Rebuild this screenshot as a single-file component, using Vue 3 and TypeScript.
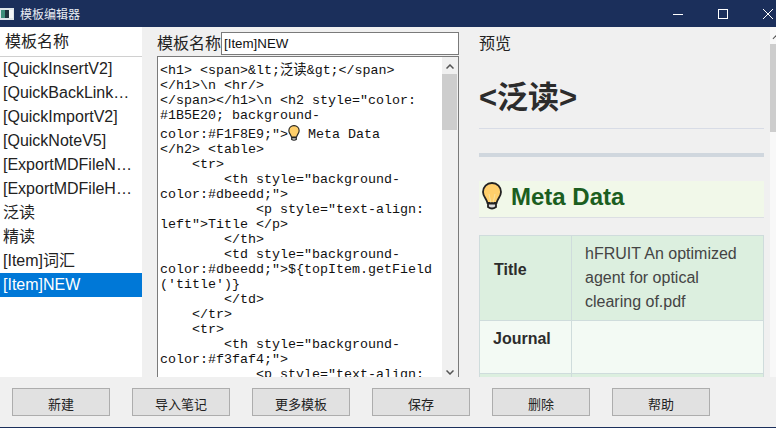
<script setup lang="ts">
const templates: string[] = [
  '[QuickInsertV2]',
  '[QuickBackLinkV2]',
  '[QuickImportV2]',
  '[QuickNoteV5]',
  '[ExportMDFileNotes]',
  '[ExportMDFileHeader]',
  '泛读',
  '精读',
  '[Item]词汇',
  '[Item]NEW',
]
const selected = '[Item]NEW'
const actions: string[] = ['新建', '导入笔记', '更多模板', '保存', '删除', '帮助']
const before: string[] = [
  '<h1> <span>&lt;泛读&gt;</span>',
  '</h1>\\n <hr/>',
  '</span></h1>\\n <h2 style="color:',
  '#1B5E20; background-',
]
const bulbLine = 'color:#F1F8E9;">'
const bulbTail = ' Meta Data'
const after: string[] = [
  '</h2> <table>',
  '    <tr>',
  '        <th style="background-',
  'color:#dbeedd;">',
  '            <p style="text-align:',
  'left">Title </p>',
  '        </th>',
  '        <td style="background-',
  'color:#dbeedd;">${topItem.getField',
  "('title')}",
  '        </td>',
  '    </tr>',
  '    <tr>',
  '        <th style="background-',
  'color:#f3faf4;">',
  '            <p style="text-align:',
]
</script>

<template>
  <div class="window">
    <header class="titlebar">
      <svg class="app-icon" viewBox="0 0 14 12" width="14" height="12">
        <rect width="14" height="12" fill="#dfe6ea" />
        <rect x="1" y="2" width="4" height="8" fill="#3f8f7a" />
        <rect x="5" y="2" width="4" height="8" fill="#20343c" />
        <rect x="9" y="2" width="4" height="8" fill="#f4f6f7" />
      </svg>
      <span class="title">模板编辑器</span>
      <div class="controls">
        <svg viewBox="0 0 10 10" width="10" height="10"><path d="M0 5.500H10" stroke="#fff" /></svg>
        <svg viewBox="0 0 10 10" width="10" height="10"><rect x=".5" y=".5" width="9" height="9" fill="none" stroke="#fff" /></svg>
        <svg viewBox="0 0 10 10" width="10" height="10"><path d="M0 0L10 10M10 0L0 10" stroke="#fff" /></svg>
      </div>
    </header>

    <main class="main">
      <aside class="list">
        <div class="list-head">模板名称</div>
        <div
          v-for="item in templates"
          :key="item"
          class="list-row"
          :class="{ active: item === selected }"
        >{{ item }}</div>
      </aside>

      <section class="editor-col">
        <div class="name-row">
          <label class="name-label">模板名称</label>
          <div class="name-input">[Item]NEW</div>
        </div>
        <div class="editor">
          <div class="code">
            <div v-for="(line, i) in before" :key="'b' + i" class="code-line">{{ line }}</div>
            <div class="code-line bulb-line">{{ bulbLine }}<svg class="bulb-small" viewBox="0 0 20 28" width="12" height="16">
                <path d="M10 1C4.8 1 1 5 1 10c0 4.500 3.500 6.500 4.500 11h9C15.500 16.500 19 14.500 19 10c0-5-3.800-9-9-9z" fill="#ffcf6b" stroke="#222" stroke-width="2" />
                <path d="M6 22h8v3.500q-4 2.500-8 0z" fill="#ddd" stroke="#222" stroke-width="2" />
              </svg>{{ bulbTail }}</div>
            <div v-for="(line, i) in after" :key="'a' + i" class="code-line">{{ line }}</div>
          </div>
          <div class="scroll">
            <svg class="arrow up" viewBox="0 0 8 5" width="8" height="5"><path d="M.5 4.500L4 1l3.500 3.500" fill="none" stroke="#555" stroke-width="1.500" /></svg>
            <div class="thumb"></div>
            <svg class="arrow down" viewBox="0 0 8 5" width="8" height="5"><path d="M.5.500L4 4l3.500-3.500" fill="none" stroke="#555" stroke-width="1.500" /></svg>
          </div>
        </div>
      </section>

      <section class="preview-col">
        <div class="preview-label">预览</div>
        <h1 class="p-h1">&lt;泛读&gt;</h1>
        <hr class="p-hr" />
        <hr class="p-hr-thick" />
        <h2 class="p-h2">
          <svg class="bulb" viewBox="0 0 20 28" width="20" height="28">
            <path d="M10 1C4.800 1 1 5 1 10c0 4.500 3.500 6.500 4.500 11h9C15.500 16.500 19 14.500 19 10c0-5-3.800-9-9-9z" fill="#ffcf6b" stroke="#222" stroke-width="1.800" />
            <path d="M7 12l2 9M13 12l-2 9" fill="none" stroke="#f7e2a0" />
            <path d="M6 21.500h8v3.500q-4 3-8 0z" fill="#ddd" stroke="#222" stroke-width="1.800" />
          </svg>
          <span class="h2-text">Meta Data</span>
        </h2>
        <table class="p-table">
          <tbody>
            <tr class="row-a">
              <th class="th-title">Title</th>
              <td>hFRUIT An optimized agent for optical clearing of.pdf</td>
            </tr>
            <tr class="row-b">
              <th class="th-journal">Journal</th>
              <td></td>
            </tr>
            <tr class="row-a row-last">
              <th></th>
              <td></td>
            </tr>
          </tbody>
        </table>
      </section>

      <div class="page-scroll">
        <div class="page-arrow"></div>
        <div class="page-thumb"></div>
      </div>
    </main>

    <footer class="actions">
      <button v-for="action in actions" :key="action" class="action" type="button">{{ action }}</button>
    </footer>
  </div>
</template>

<style>
html,
body {
  margin: 0;
  overflow: hidden;
}
</style>

<style scoped>
.window {
  width: 776px;
  height: 428px;
  display: flex;
  flex-direction: column;
  background: #f0f0f0;
  font-family: "Liberation Sans", "Noto Sans CJK SC", sans-serif;
  color: #1c1c1c;
  overflow: hidden;
  border-bottom: 1px solid #1b2f5b;
  box-sizing: border-box;
}

.titlebar {
  height: 27px;
  flex: none;
  display: flex;
  align-items: center;
  background: #1b2f5b;
  color: #e8ecf3;
}
.app-icon {
  flex: none;
}
.title {
  margin-left: 6px;
  font-size: 12px;
}
.controls {
  margin-left: auto;
  display: flex;
  gap: 35px;
  margin-right: 3px;
}
.controls svg {
  display: block;
}

.main {
  flex: none;
  height: 350px;
  display: flex;
  overflow: hidden;
}

.list {
  width: 142px;
  flex: none;
  background: #fff;
}
.list-head {
  height: 30px;
  box-sizing: border-box;
  padding: 4px 0 0 5px;
  font-size: 16px;
  line-height: 22px;
  color: #222;
  border-bottom: 1px solid #d0d0d0;
}
.list-row {
  height: 24px;
  line-height: 24px;
  padding-left: 3px;
  padding-right: 10px;
  font-size: 16px;
  white-space: nowrap;
  overflow: hidden;
  text-overflow: ellipsis;
  color: #222;
}
.list-row.active {
  background: #0078d7;
  color: #fff;
}

.editor-col {
  width: 302px;
  flex: none;
  margin-left: 15px;
  display: flex;
  flex-direction: column;
}
.name-row {
  display: flex;
  height: 29px;
  flex: none;
  padding-top: 5px;
  box-sizing: border-box;
}
.name-label {
  width: 64px;
  flex: none;
  font-size: 16px;
  line-height: 24px;
  color: #222;
}
.name-input {
  flex: 1;
  height: 23px;
  box-sizing: border-box;
  border: 1px solid #7a7a7a;
  background: #fff;
  font-size: 13.33px;
  line-height: 21px;
  padding-left: 2px;
  color: #111;
}
.editor {
  flex: 1;
  min-height: 0;
  display: flex;
  background: #fff;
  border: 1px solid #7a7a7a;
  border-bottom: 0;
  overflow: hidden;
}
.code {
  flex: 1;
  min-width: 0;
  padding: 6px 0 0 2px;
  font-family: "Liberation Mono", "Noto Sans CJK SC", monospace;
  font-size: 13.33px;
  color: #111;
}
.code-line {
  height: 15px;
  line-height: 15px;
  white-space: pre;
}
.bulb-line {
  height: 19px;
  line-height: 23px;
}
.bulb-small {
  vertical-align: -3px;
}
.scroll {
  position: relative;
  width: 16px;
  flex: none;
  background: #f0f0f0;
}
.thumb {
  margin-top: 17px;
  height: 56px;
  background: #cdcdcd;
  margin-right: 1px;
}
.arrow {
  position: absolute;
  left: 4px;
}
.arrow.up {
  top: 7px;
}
.arrow.down {
  bottom: 2px;
}

.preview-col {
  width: 285px;
  flex: none;
  margin-left: 20px;
  overflow: hidden;
}
.preview-label {
  margin-top: 5px;
  font-size: 16px;
  line-height: 24px;
  color: #222;
}
.p-h1 {
  margin: 22px 0 0;
  height: 50px;
  font-size: 31px;
  line-height: 40px;
  font-weight: 700;
  color: #2c2c2c;
}
.p-hr {
  margin: 0;
  height: 1px;
  border: 0;
  background: #d8dce6;
}
.p-hr-thick {
  margin: 24px 0 0;
  height: 4px;
  border: 0;
  background: #d0d7de;
}
.p-h2 {
  margin: 24px 0 0;
  height: 37px;
  box-sizing: border-box;
  display: flex;
  align-items: center;
  background: #f1f8e9;
  border-bottom: 1px solid #dcdfe3;
  font-size: 24px;
  font-weight: 700;
  color: #1b5e20;
}
.h2-text {
  margin-top: -4px;
}
.bulb {
  flex: none;
  margin: -7px 9px 0 3px;
}
.p-table {
  margin-top: 17px;
  width: 285px;
  border-collapse: collapse;
  table-layout: fixed;
  font-size: 16px;
  color: #444;
}
.p-table th,
.p-table td {
  border: 1px solid #cfdcdc;
  padding: 0;
}
.p-table th {
  width: 92px;
  text-align: left;
  color: #2c2c2c;
  box-sizing: border-box;
}
.p-table td {
  padding: 6px 10px 6px 13px;
  line-height: 24px;
  vertical-align: top;
}
.row-a {
  background: #dcefdf;
}
.row-b {
  background: #f3faf4;
}
.row-b td,
.row-last td {
  height: 40px;
}
.th-title {
  padding-left: 14px !important;
  padding-bottom: 17px !important;
}
.th-journal {
  padding: 6px 0 0 13px !important;
  vertical-align: top;
  height: 46px;
  line-height: 24px;
}

.page-scroll {
  width: 6px;
  flex: none;
  margin-left: 6px;
  background: #f8f8f8;
  overflow: hidden;
}
.page-arrow {
  height: 17px;
  position: relative;
}
.page-arrow::before {
  content: "";
  position: absolute;
  left: 4px;
  top: 8px;
  width: 6px;
  height: 6px;
  border-left: 1.5px solid #555;
  border-top: 1.5px solid #555;
  transform: rotate(45deg);
}
.page-thumb {
  height: 88px;
  background: #cdcdcd;
}

.actions {
  flex: 1;
  display: flex;
  gap: 22px;
  padding: 11px 0 0 12px;
  box-sizing: border-box;
}
.action {
  width: 98px;
  height: 28px;
  box-sizing: border-box;
  border: 1px solid #adadad;
  background: #e1e1e1;
  font-family: "Noto Sans CJK SC", sans-serif;
  font-size: 13px;
  color: #222;
  padding: 3px 0 0;
  line-height: 20px;
}
</style>
